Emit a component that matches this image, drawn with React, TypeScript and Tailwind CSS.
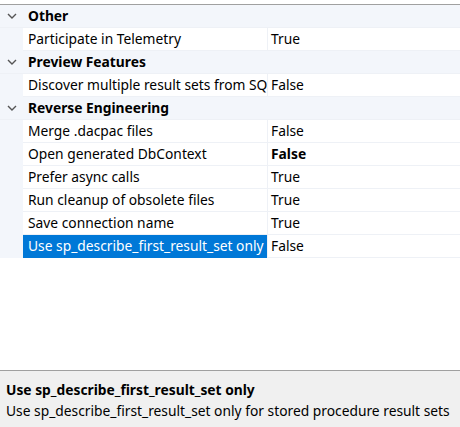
import React from 'react';

type Row = { name: string; value: string; bold?: boolean; selected?: boolean };
type Category = { title: string; rows: Row[] };

const categories: Category[] = [
  { title: 'Other', rows: [{ name: 'Participate in Telemetry', value: 'True' }] },
  {
    title: 'Preview Features',
    rows: [{ name: 'Discover multiple result sets from SQL stored procedures', value: 'False' }],
  },
  {
    title: 'Reverse Engineering',
    rows: [
      { name: 'Merge .dacpac files', value: 'False' },
      { name: 'Open generated DbContext', value: 'False', bold: true },
      { name: 'Prefer async calls', value: 'True' },
      { name: 'Run cleanup of obsolete files', value: 'True' },
      { name: 'Save connection name', value: 'True' },
      { name: 'Use sp_describe_first_result_set only', value: 'False', selected: true },
    ],
  },
];

const Chevron = () => (
  <svg width="10" height="6" viewBox="0 0 10 6" className="block">
    <path d="M1 1 L5 5 L9 1" fill="none" stroke="#555" strokeWidth="1.4" />
  </svg>
);

export default function App() {
  return (
    <div
      className="flex h-[427px] w-[460px] flex-col bg-white text-[13.8px] text-black"
      style={{ fontFamily: '"Noto Sans", "Open Sans", sans-serif' }}
    >
      <div className="h-[5px] shrink-0 border-b border-[#a0a0a0]" />
      <div className="flex flex-col">
        {categories.map((cat) => (
          <React.Fragment key={cat.title}>
            {/* category header */}
            <div className="flex h-[23px] items-center border-b border-[#eef1f6] bg-[#f3f6fb]">
              <div className="flex w-[23px] justify-center pl-[1px]">
                <Chevron />
              </div>
              <span className="pl-[5px] font-bold">{cat.title}</span>
            </div>
            {cat.rows.map((row) => (
              <div key={row.name} className="flex h-[23px] bg-[#f3f6fb]">
                <div className="w-[23px] shrink-0" />
                <div
                  className={
                    row.selected
                      ? 'flex w-[244px] shrink-0 items-center overflow-hidden whitespace-nowrap border-b border-[#0078d7] bg-[#0078d7] pl-[5px] text-white'
                      : 'flex w-[244px] shrink-0 items-center overflow-hidden whitespace-nowrap border-b border-[#eef1f6] bg-white pl-[5px]'
                  }
                >
                  {row.name}
                </div>
                <div
                  className={
                    'flex flex-1 items-center border-b border-l border-[#eef1f6] bg-white pl-[3px]' +
                    (row.bold ? ' font-bold' : '')
                  }
                >
                  {row.value}
                </div>
              </div>
            ))}
          </React.Fragment>
        ))}
      </div>
      <div className="flex-1" />
      <div className="flex h-[57px] shrink-0 flex-col border-t border-[#a0a0a0] bg-[#f0f0f0] px-[6px] pt-[10px]">
        <span className="font-bold leading-[18px]">Use sp_describe_first_result_set only</span>
        <span className="mt-[3px] whitespace-nowrap leading-[18px]">
          Use sp_describe_first_result_set only for stored procedure result sets
        </span>
      </div>
    </div>
  );
}
